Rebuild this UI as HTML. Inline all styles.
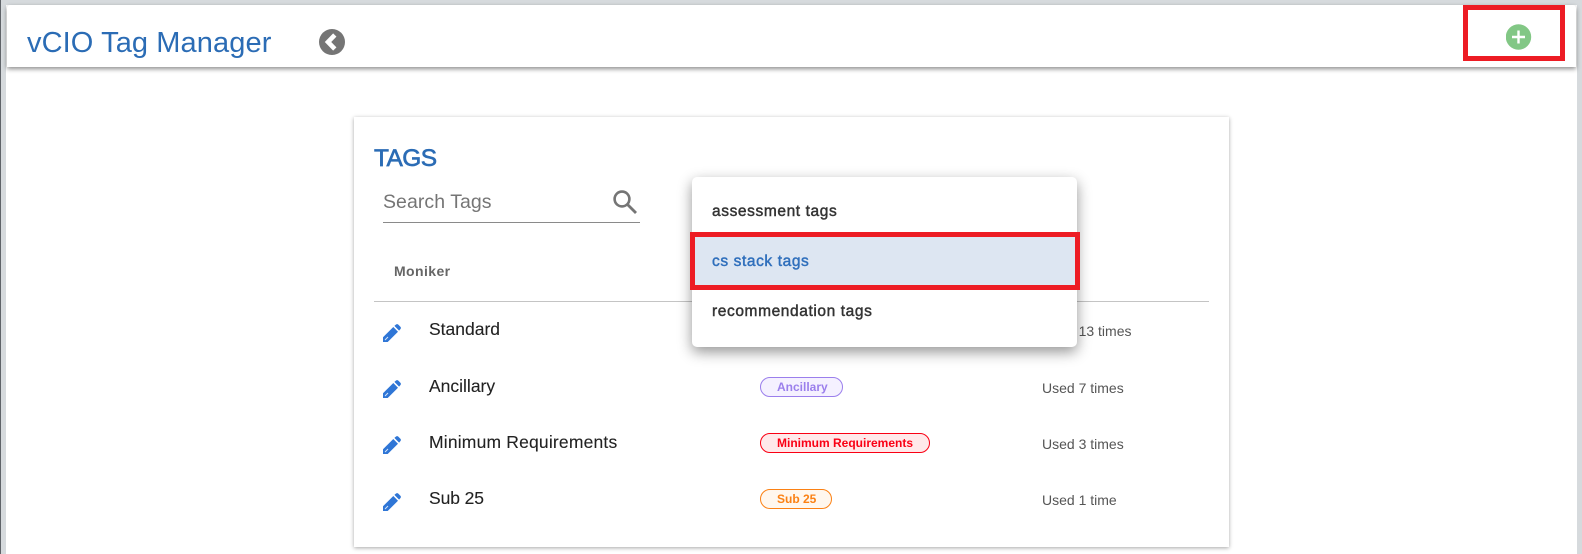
<!DOCTYPE html>
<html>
<head>
<meta charset="utf-8">
<style>
html,body{margin:0;padding:0;width:1582px;height:554px;overflow:hidden;background:#fff;font-family:"Liberation Sans",sans-serif}
.a{position:absolute;white-space:nowrap}
.m{-webkit-text-stroke:.45px currentColor}
.pill{position:absolute;box-sizing:border-box;height:20px;border-radius:10px;border:1px solid;font-size:12px;font-weight:bold;line-height:18px;padding-left:16px;white-space:nowrap}
.row{font-size:17.5px;line-height:22px;color:#222;-webkit-text-stroke:.1px #222}
.used{font-size:14px;line-height:18px;color:#555}
.item{font-size:15.5px;line-height:18px;letter-spacing:.6px}
</style>
</head>
<body>
<div class="a" style="left:0;top:0;width:1582px;height:5px;background:#d6dadd"></div>
<div class="a" style="left:0;top:0;width:1px;height:554px;background:#5f6368"></div>
<div class="a" style="left:1px;top:0;width:5px;height:554px;background:#d6dadd"></div>
<div class="a" style="left:1577px;top:0;width:5px;height:554px;background:#d6dadd"></div>

<!-- header -->
<div class="a" style="left:7px;top:5px;width:1569px;height:62px;background:#fff;border-radius:3px 3px 0 0;box-shadow:0 2px 5px rgba(0,0,0,.45)"></div>
<div class="a" style="left:27px;top:27px;font-size:29px;color:#2b6cb5;height:33px;line-height:33px;letter-spacing:.1px">vCIO Tag Manager</div>
<svg class="a" style="left:319px;top:29px" width="26" height="26" viewBox="0 0 26 26"><circle cx="13" cy="13" r="13" fill="#757575"/><path d="M15.800 6 9 13l6.800 7" fill="none" stroke="#fff" stroke-width="4.600"/></svg>
<svg class="a" style="left:1506px;top:24px" width="26" height="26" viewBox="0 0 26 26"><circle cx="12.500" cy="13" r="12.700" fill="#82c785"/><path d="M12.500 6.500v13M6 13h13" fill="none" stroke="#fff" stroke-width="2.400"/></svg>
<div class="a" style="left:1463px;top:5px;width:102px;height:56px;box-sizing:border-box;border:5px solid #ed1c24"></div>

<!-- card -->
<div class="a" style="left:354px;top:117px;width:875px;height:430px;background:#fff;box-shadow:0 1px 4px rgba(0,0,0,.35)"></div>
<div class="a" style="left:374px;top:145px;font-size:24.500px;line-height:28px;color:#2b6cb5;-webkit-text-stroke:.65px #2b6cb5;letter-spacing:-.6px">TAGS</div>
<div class="a" style="left:383px;top:190px;font-size:19.500px;line-height:24px;color:#757575;letter-spacing:.05px">Search Tags</div>
<svg class="a" style="left:612px;top:189px" width="26" height="25" viewBox="0 0 26 25"><circle cx="10" cy="10" r="7.400" fill="none" stroke="#757575" stroke-width="2.600"/><path d="M15.500 15.500 24 24" stroke="#757575" stroke-width="2.800" fill="none"/></svg>
<div class="a" style="left:383px;top:222px;width:257px;height:1px;background:#8a8a8a"></div>
<div class="a" style="left:394px;top:262px;font-size:14px;line-height:18px;font-weight:bold;color:#666;letter-spacing:.4px">Moniker</div>
<div class="a" style="left:374px;top:301px;width:835px;height:1px;background:#c4c4c4"></div>

<!-- rows -->
<svg class="a" style="left:383px;top:324px" width="18" height="18" viewBox="0 0 18 18"><path d="M0 18V13.300L10.300 3 15 7.700 4.700 18Z M11.400 1.900 12.900.6c.7-.7 1.700-.7 2.400 0l2.100 2.100c.7.7.7 1.700 0 2.400L16.100 6.600Z" fill="#2f76d6"/><path d="M2 16 5 13" stroke="#d5e4f8" stroke-width="1"/></svg>
<svg class="a" style="left:383px;top:380px" width="18" height="18" viewBox="0 0 18 18"><path d="M0 18V13.300L10.300 3 15 7.700 4.700 18Z M11.400 1.900 12.900.6c.7-.7 1.700-.7 2.400 0l2.100 2.100c.7.7.7 1.700 0 2.400L16.100 6.600Z" fill="#2f76d6"/><path d="M2 16 5 13" stroke="#d5e4f8" stroke-width="1"/></svg>
<svg class="a" style="left:383px;top:436px" width="18" height="18" viewBox="0 0 18 18"><path d="M0 18V13.300L10.300 3 15 7.700 4.700 18Z M11.400 1.900 12.900.6c.7-.7 1.700-.7 2.400 0l2.100 2.100c.7.7.7 1.700 0 2.400L16.100 6.600Z" fill="#2f76d6"/><path d="M2 16 5 13" stroke="#d5e4f8" stroke-width="1"/></svg>
<svg class="a" style="left:383px;top:493px" width="18" height="18" viewBox="0 0 18 18"><path d="M0 18V13.300L10.300 3 15 7.700 4.700 18Z M11.400 1.900 12.900.6c.7-.7 1.700-.7 2.400 0l2.100 2.100c.7.7.7 1.700 0 2.400L16.100 6.600Z" fill="#2f76d6"/><path d="M2 16 5 13" stroke="#d5e4f8" stroke-width="1"/></svg>

<div class="a row" style="left:429px;top:318px">Standard</div>
<div class="a row" style="left:429px;top:375px">Ancillary</div>
<div class="a row" style="left:429px;top:431px;letter-spacing:.18px">Minimum Requirements</div>
<div class="a row" style="left:429px;top:487px;letter-spacing:-.1px">Sub 25</div>

<div class="pill" style="left:760px;top:377px;width:83px;color:#9b7fec;border-color:#9b7fec;background:#f5f1ff">Ancillary</div>
<div class="pill" style="left:760px;top:433px;width:170px;color:#fa0014;border-color:#fa0014;background:#ffe9ea">Minimum Requirements</div>
<div class="pill" style="left:760px;top:489px;width:72px;color:#fb8114;border-color:#fb8114;background:#fff7ee">Sub 25</div>

<div class="a used" style="left:1042px;top:322px">Used 13 times</div>
<div class="a used" style="left:1042px;top:379px">Used 7 times</div>
<div class="a used" style="left:1042px;top:435px">Used 3 times</div>
<div class="a used" style="left:1042px;top:491px">Used 1 time</div>

<!-- dropdown -->
<div class="a" style="left:692px;top:177px;width:385px;height:170px;background:#fff;border-radius:5px;box-shadow:0 5px 14px rgba(0,0,0,.42)"></div>
<div class="a" style="left:695px;top:237px;width:380px;height:48px;background:#dde6f2"></div>
<div class="a" style="left:690px;top:232px;width:390px;height:58px;box-sizing:border-box;border:5px solid #ed1c24"></div>
<div class="a m item" style="left:712px;top:203px;color:#333">assessment tags</div>
<div class="a m item" style="left:712px;top:253px;color:#2f6fbc">cs stack tags</div>
<div class="a m item" style="left:712px;top:303px;color:#333">recommendation tags</div>
</body>
</html>
